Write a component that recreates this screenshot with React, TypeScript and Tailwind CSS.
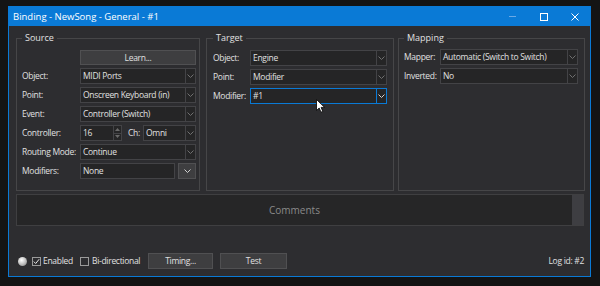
import React from "react";

function Chevron({ color = "#7a7a7a" }: { color?: string }) {
  return (
    <svg width="7" height="4" viewBox="0 0 7 4">
      <path d="M0.5 0.5 L3.5 3.5 L6.5 0.5" fill="none" stroke={color} strokeWidth="1" />
    </svg>
  );
}

function Combo({ value, width, focused = false }: { value: string; width: string; focused?: boolean }) {
  return (
    <div
      className={`flex h-4 ${width} border ${focused ? "border-[#0a7ad6]" : "border-[#434346]"} bg-[#252526]`}
    >
      <div className="flex-1 truncate pl-[2px] leading-[14px]">{value}</div>
      <div
        className={`flex w-[10px] items-center justify-center border-l ${focused ? "border-[#0a7ad6]" : "border-[#434346]"}`}
      >
        <Chevron color={focused ? "#d0d0d0" : "#707070"} />
      </div>
    </div>
  );
}

function Row({ label, labelW, children }: { label: string; labelW: string; children: React.ReactNode }) {
  return (
    <div className="flex h-4 items-center">
      <div className={`${labelW} shrink-0 whitespace-nowrap leading-[14px]`}>{label}</div>
      {children}
    </div>
  );
}

function Checkbox({ checked = false }: { checked?: boolean }) {
  return (
    <div className="flex h-[9px] w-[9px] items-center justify-center border border-[#9a9a9a]">
      {checked && (
        <svg width="7" height="7" viewBox="0 0 7 7">
          <path d="M0.8 3.6 L2.7 5.5 L6.2 1.2" fill="none" stroke="#e6e6e6" strokeWidth="1" />
        </svg>
      )}
    </div>
  );
}

export default function App() {
  return (
    <div className="h-[286px] w-[600px] overflow-hidden bg-[#141414] pt-[6px] pl-[8px] font-['Open_Sans','Noto_Sans',sans-serif] text-[8.5px] tracking-[-0.3px] text-[#e0e0e0]">
      <div className="relative flex h-[271px] w-[583px] flex-col border border-[#0a7ad6] bg-[#2d2d30]">
        {/* Title bar */}
        <div className="flex h-[19px] items-center bg-[#0a7ad6] text-white">
          <div className="flex-1 pl-[4px] text-[9.5px] leading-[19px] tracking-normal">Binding - NewSong - General - #1</div>
          <div className="flex h-full w-[31px] items-center justify-center">
            <div className="h-px w-[7px] bg-[#6aa9e6]" />
          </div>
          <div className="flex h-full w-[31px] items-center justify-center">
            <div className="h-[8px] w-[8px] border border-white" />
          </div>
          <div className="flex h-full w-[31px] items-center justify-center">
            <svg width="8" height="8" viewBox="0 0 8 8">
              <path d="M0.5 0.5 L7.5 7.5 M7.5 0.5 L0.5 7.5" stroke="white" strokeWidth="1" />
            </svg>
          </div>
        </div>

        {/* Body */}
        <div className="flex flex-1 flex-col pt-[5px] pl-[7px]">
          <div className="flex h-[160px]">
            {/* Source */}
            <fieldset className="h-[160px] w-[184px] border border-[#464648] pr-[3px] pl-[5px]">
              <legend className="px-[3px] text-[9px] leading-[14px] tracking-normal">Source</legend>
              <div className="flex flex-col gap-[3px] pt-[5px]">
                <div className="flex">
                  <div className="w-[58px]" />
                  <div className="flex h-[15px] w-[116px] items-center justify-center border border-[#505052] bg-[#3e3e40] leading-[13px]">
                    Learn...
                  </div>
                </div>
                <Row label="Object:" labelW="w-[58px]">
                  <Combo value="MIDI Ports" width="w-[116px]" />
                </Row>
                <Row label="Point:" labelW="w-[58px]">
                  <Combo value="Onscreen Keyboard (in)" width="w-[116px]" />
                </Row>
                <Row label="Event:" labelW="w-[58px]">
                  <Combo value="Controller (Switch)" width="w-[116px]" />
                </Row>
                <Row label="Controller:" labelW="w-[58px]">
                  <div className="flex h-4 w-[42px] border border-[#434346] bg-[#252526]">
                    <div className="flex-1 pl-[2px] leading-[14px]">16</div>
                    <div className="flex w-[8px] flex-col border-l border-[#434346]">
                      <div className="flex flex-1 items-center justify-center border-b border-[#434346]">
                        <svg width="5" height="3" viewBox="0 0 5 3">
                          <path d="M0 3 L2.5 0 L5 3 Z" fill="#6a6a6a" />
                        </svg>
                      </div>
                      <div className="flex flex-1 items-center justify-center">
                        <svg width="5" height="3" viewBox="0 0 5 3">
                          <path d="M0 0 L2.5 3 L5 0 Z" fill="#6a6a6a" />
                        </svg>
                      </div>
                    </div>
                  </div>
                  <div className="ml-[6px] w-[15px] leading-[14px]">Ch:</div>
                  <Combo value="Omni" width="w-[53px]" />
                </Row>
                <Row label="Routing Mode:" labelW="w-[58px]">
                  <Combo value="Continue" width="w-[116px]" />
                </Row>
                <Row label="Modifiers:" labelW="w-[58px]">
                  <div className="h-4 w-[95px] border border-[#434346] bg-[#252526] pl-[2px] leading-[14px]">None</div>
                  <div className="ml-[3px] flex h-4 w-[18px] items-center justify-center border border-[#505052] bg-[#3e3e40]">
                    <Chevron color="#d0d0d0" />
                  </div>
                </Row>
              </div>
            </fieldset>

            {/* Target */}
            <fieldset className="ml-[6px] h-[160px] w-[187px] border border-[#464648] pr-[6px] pl-[6px]">
              <legend className="px-[3px] text-[9px] leading-[14px] tracking-normal">Target</legend>
              <div className="flex flex-col gap-[3px] pt-[5px]">
                <Row label="Object:" labelW="w-[37px]">
                  <Combo value="Engine" width="w-[137px]" />
                </Row>
                <Row label="Point:" labelW="w-[37px]">
                  <Combo value="Modifier" width="w-[137px]" />
                </Row>
                <Row label="Modifier:" labelW="w-[37px]">
                  <Combo value="#1" width="w-[137px]" focused />
                </Row>
              </div>
            </fieldset>

            {/* Mapping */}
            <fieldset className="ml-[4px] h-[160px] w-[187px] border border-[#464648] pr-[5px] pl-[5px]">
              <legend className="px-[3px] text-[9px] leading-[14px] tracking-normal">Mapping</legend>
              <div className="flex flex-col gap-[3px] pt-[4px]">
                <Row label="Mapper:" labelW="w-[36px]">
                  <Combo value="Automatic (Switch to Switch)" width="w-[138px]" />
                </Row>
                <Row label="Inverted:" labelW="w-[36px]">
                  <Combo value="No" width="w-[138px]" />
                </Row>
              </div>
            </fieldset>
          </div>

          {/* Comments */}
          <div className="mt-[3px] flex h-[32px] w-[568px] border border-[#3f3f41] bg-[#262627]">
            <div className="flex flex-1 items-center justify-center text-[10px] tracking-normal text-[#8a8a8a]">
              Comments
            </div>
            <div className="w-[11px] bg-[#3e3e42]" />
          </div>

          {/* Bottom row */}
          <div className="mt-[27px] flex h-4 w-[568px] items-center">
            <div className="ml-[2px] h-[9px] w-[9px] rounded-full bg-[radial-gradient(circle_at_40%_35%,#ffffff,#c8c8c8_45%,#7a7a7a)]" />
            <div className="ml-[5px]">
              <Checkbox checked />
            </div>
            <div className="ml-[2px] w-[37px] whitespace-nowrap leading-[14px]">Enabled</div>
            <Checkbox />
            <div className="ml-[3px] w-[56px] whitespace-nowrap leading-[14px]">Bi-directional</div>
            <div className="flex h-4 w-[65px] items-center justify-center border border-[#505052] bg-[#3e3e40]">
              Timing...
            </div>
            <div className="ml-[7px] flex h-4 w-[67px] items-center justify-center border border-[#505052] bg-[#3e3e40]">
              Test
            </div>
            <div className="flex-1" />
            <div className="leading-[14px]">Log id: #2</div>
          </div>
        </div>

        {/* Mouse cursor */}
        <svg className="absolute top-[92px] left-[307px]" width="10" height="15" viewBox="0 0 10 15">
          <path
            d="M0.5 0.5 L0.5 11.5 L3.2 9 L5 13.2 L6.8 12.4 L5.1 8.4 L8.6 8.4 Z"
            fill="white"
            stroke="black"
            strokeWidth="0.8"
          />
        </svg>
      </div>
    </div>
  );
}
